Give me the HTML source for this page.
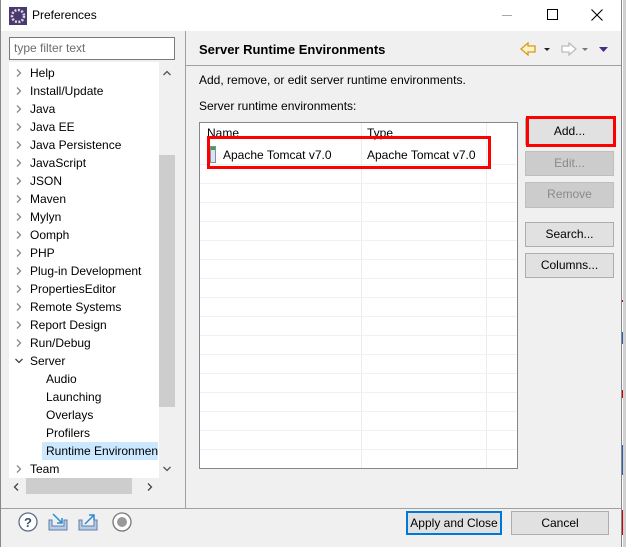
<!DOCTYPE html>
<html><head><meta charset="utf-8"><style>
*{margin:0;padding:0;box-sizing:border-box}
body{width:626px;height:547px;overflow:hidden;background:#fff;font-family:"Liberation Sans","Noto Sans CJK KR",sans-serif;font-size:12px;color:#000;position:relative}
.a{position:absolute}
.btn{position:absolute;background:#e1e1e1;border:1px solid #adadad;text-align:center;line-height:23px;font-size:12px}
.dis{color:#8a8a8a;background:#cccccc;border-color:#bfbfbf}
.ti{position:absolute;left:30px;font-size:12px;line-height:18px}
.ch{position:absolute;left:15px}
.sub{left:46px}
</style></head><body>
<div class="a" style="left:621px;top:0;width:5px;height:547px;background:#fff"></div>
<div class="a" style="left:622px;top:300px;width:4px;height:2px;background:#c00"></div>
<div class="a" style="left:622px;top:332px;width:4px;height:12px;background:#2a5db0"></div>
<div class="a" style="left:622px;top:390px;width:4px;height:8px;background:#c00"></div>
<div class="a" style="left:622px;top:445px;width:4px;height:30px;background:#2a5db0"></div>
<div class="a" style="left:622px;top:510px;width:4px;height:25px;background:#c00"></div>
<div class="a" style="left:623px;top:0;width:3px;height:547px;background:#d0d0d0"></div>
<div class="a" style="left:0;top:0;width:622px;height:547px;background:#f0f0f0;border-left:1px solid #888;border-right:1px solid #888"></div>
<div class="a" style="left:1px;top:0;width:620px;height:31px;background:#fff"></div>
<svg class="a" style="left:9px;top:7px" width="18" height="18" viewBox="0 0 18 18"><rect width="18" height="18" fill="#4b3a72"/><circle cx="9" cy="9" r="6" fill="none" stroke="#ddd" stroke-width="2.5" stroke-dasharray="2 1.5"/><circle cx="9" cy="9" r="3.5" fill="#4b3a72"/></svg>
<div class="a" style="left:32px;top:8px;font-size:12px">Preferences</div>
<div class="a" style="left:502px;top:15px;width:10px;height:1px;background:#aaa"></div>
<div class="a" style="left:547px;top:9px;width:11px;height:11px;border:1px solid #000"></div>
<svg class="a" style="left:591px;top:9px" width="12" height="12"><path d="M0.5 0.5L11.5 11.5M11.5 0.5L0.5 11.5" stroke="#000" stroke-width="1.1"/></svg>
<div class="a" style="left:9px;top:37px;width:166px;height:23px;background:#fff;border:1px solid #7a7a7a;color:#6d6d6d;padding:3px 0 0 4px">type filter text</div>
<div class="a" style="left:9px;top:62px;width:166px;height:432px;background:#fff"></div>
<div class="a" style="left:159px;top:62px;width:16px;height:416px;background:#f0f0f0"></div>
<div class="a" style="left:159px;top:155px;width:16px;height:252px;background:#cdcdcd"></div>
<svg class="a" style="left:162px;top:69px" width="10" height="8"><path d="M1.5 6L5 2.5L8.5 6" stroke="#555" stroke-width="1.3" fill="none"/></svg>
<svg class="a" style="left:162px;top:465px" width="10" height="8"><path d="M1.5 2L5 5.5L8.5 2" stroke="#555" stroke-width="1.3" fill="none"/></svg>
<div class="a" style="left:9px;top:478px;width:166px;height:16px;background:#f0f0f0"></div>
<div class="a" style="left:26px;top:478px;width:106px;height:16px;background:#cdcdcd"></div>
<svg class="a" style="left:12px;top:482px" width="8" height="10"><path d="M6 1.5L2.5 5L6 8.5" stroke="#444" stroke-width="1.3" fill="none"/></svg>
<svg class="a" style="left:146px;top:482px" width="8" height="10"><path d="M2 1.5L5.5 5L2 8.5" stroke="#444" stroke-width="1.3" fill="none"/></svg>
<div class="a" style="left:42px;top:442px;width:116px;height:18px;background:#cce8ff"></div>
<div id="tree"></div>
<div class="a" style="left:185px;top:31px;width:1px;height:478px;background:#a0a0a0"></div>
<div class="a" style="left:199px;top:42px;font-size:13px;font-weight:bold">Server Runtime Environments</div>
<svg class="a" style="left:518px;top:40px" width="100" height="18" viewBox="0 0 100 18">
<path d="M3 9 L10 3 V6 H17 V12 H10 V15 Z" fill="#fff3c8" stroke="#d69a1b" stroke-width="1.3"/>
<path d="M26 8 h6 l-3 3z" fill="#222"/>
<path d="M58 9 L51 3 V6 H44 V12 H51 V15 Z" fill="#fff" stroke="#bbb" stroke-width="1.3"/>
<path d="M64 8 h6 l-3 3z" fill="#777"/>
<path d="M81 7 h9 l-4.5 5z" fill="#4a2c86"/>
</svg>
<div class="a" style="left:186px;top:65px;width:435px;height:1px;background:#a0a0a0"></div>
<div class="a" style="left:199px;top:73px">Add, remove, or edit server runtime environments.</div>
<div class="a" style="left:199px;top:99px">Server runtime environments:</div>
<div class="a" style="left:199px;top:122px;width:319px;height:347px;background:#fff;border:1px solid #828790;overflow:hidden" id="tbl">
 <div class="a" style="left:161px;top:0;width:1px;height:347px;background:#e8edf3"></div>
 <div class="a" style="left:286px;top:0;width:1px;height:347px;background:#e8edf3"></div>
 <div class="a" style="left:7px;top:3px">Name</div>
 <div class="a" style="left:167px;top:3px">Type</div>
</div>
<div class="a" style="left:210px;top:146px;width:6px;height:17px;background:#dde4ee;border:1px solid #8090a0"></div>
<div class="a" style="left:211px;top:147px;width:4px;height:3px;background:#3a3"></div>
<div class="a" style="left:223px;top:148px">Apache Tomcat v7.0</div>
<div class="a" style="left:367px;top:148px">Apache Tomcat v7.0</div>
<div class="a" style="left:207px;top:136px;width:284px;height:33px;border:3px solid #f00"></div>
<div class="btn" style="left:525px;top:118px;width:89px;height:27px;line-height:25px">Add...</div>
<div class="a" style="left:526px;top:116px;width:90px;height:31px;border:3px solid #f00"></div>
<div class="btn dis" style="left:525px;top:151px;width:89px;height:25px">Edit...</div>
<div class="btn dis" style="left:525px;top:182px;width:89px;height:26px">Remove</div>
<div class="btn" style="left:525px;top:222px;width:89px;height:25px">Search...</div>
<div class="btn" style="left:525px;top:253px;width:89px;height:25px">Columns...</div>
<div class="a" style="left:1px;top:508px;width:620px;height:1px;background:#a0a0a0"></div>
<svg class="a" style="left:15px;top:510px" width="120" height="26" viewBox="0 0 120 26">
<circle cx="13" cy="12" r="9" fill="#fff" stroke="#5a6e8c" stroke-width="1.3"/>
<text x="13" y="17" font-size="13" font-weight="bold" text-anchor="middle" fill="#3a4e6c" font-family="Liberation Sans">?</text>
<path d="M34 10 v10 h18 v-10 h-3 v6 h-12 v-6z" fill="#b7cbe4" stroke="#5a7fb0"/>
<path d="M38 4 l9 9 M47 8 v5 h-5" stroke="#2d8bd0" stroke-width="1.5" fill="none"/>
<path d="M64 10 v10 h18 v-10 h-3 v6 h-12 v-6z" fill="#b7cbe4" stroke="#5a7fb0"/>
<path d="M70 14 l9 -9 M74 5 h5 v5" stroke="#2d8bd0" stroke-width="1.5" fill="none"/>
<circle cx="107" cy="12" r="9" fill="#fff" stroke="#777" stroke-width="1.3"/>
<circle cx="107" cy="12" r="5" fill="#999"/>
</svg>
<div class="btn" style="left:406px;top:511px;width:96px;height:24px;border:2px solid #0078d7;line-height:20px">Apply and Close</div>
<div class="btn" style="left:511px;top:511px;width:98px;height:24px;line-height:22px">Cancel</div>
<script>
var items=[["Help",0],["Install/Update",0],["Java",0],["Java EE",0],["Java Persistence",0],["JavaScript",0],["JSON",0],["Maven",0],["Mylyn",0],["Oomph",0],["PHP",0],["Plug-in Development",0],["PropertiesEditor",0],["Remote Systems",0],["Report Design",0],["Run/Debug",0],["Server",2],["Audio",1],["Launching",1],["Overlays",1],["Profilers",1],["Runtime Environmen",1],["Team",0]];
var h="";items.forEach(function(it,i){var y=64+i*18;
if(it[1]==0)h+='<svg class="ch" style="top:'+(y+4)+'px" width="8" height="10"><path d="M2 1.5L5.5 5L2 8.5" stroke="#888" stroke-width="1.3" fill="none"/></svg>';
if(it[1]==2)h+='<svg class="ch" style="top:'+(y+5)+'px;left:14px" width="10" height="8"><path d="M1.5 2L5 5.5L8.5 2" stroke="#444" stroke-width="1.3" fill="none"/></svg>';
h+='<div class="ti'+(it[1]==1?' sub':'')+'" style="top:'+y+'px">'+it[0]+'</div>';});
document.getElementById('tree').innerHTML=h;
var t="";for(var y=41;y<347;y+=19)t+='<div class="a" style="left:0;top:'+y+'px;width:319px;height:1px;background:#eef1f5"></div>';
document.getElementById('tbl').insertAdjacentHTML('beforeend',t);
</script>
</body></html>
